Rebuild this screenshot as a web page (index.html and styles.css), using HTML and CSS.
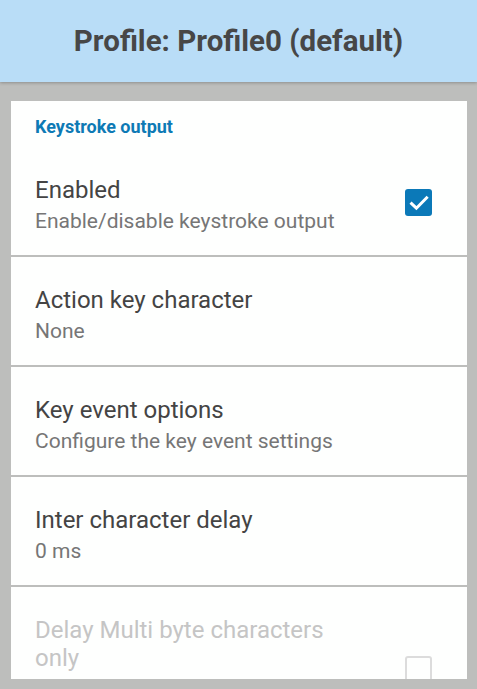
FILE: index.html
```html
<!DOCTYPE html>
<html>
<head>
<meta charset="utf-8">
<link rel="stylesheet" href="styles.css">
</head>
<body>
<header class="appbar">
  <h1 class="appbar-title">Profile: Profile0 (default)</h1>
</header>
<main class="content">
  <section class="card first">
    <div class="section-title">Keystroke output</div>
    <div class="pref">
      <div class="pref-text">
        <div class="pref-title">Enabled</div>
        <div class="pref-summary">Enable/disable keystroke output</div>
      </div>
      <div class="checkbox checked">
        <svg viewBox="0 0 24 24" width="24" height="24"><path d="M4.6 12.6 L9.4 17.2 L19.6 6.8" fill="none" stroke="#fff" stroke-width="3" stroke-linecap="square"/></svg>
      </div>
    </div>
  </section>
  <section class="card">
    <div class="pref">
      <div class="pref-text">
        <div class="pref-title">Action key character</div>
        <div class="pref-summary">None</div>
      </div>
    </div>
  </section>
  <section class="card">
    <div class="pref">
      <div class="pref-text">
        <div class="pref-title">Key event options</div>
        <div class="pref-summary">Configure the key event settings</div>
      </div>
    </div>
  </section>
  <section class="card">
    <div class="pref">
      <div class="pref-text">
        <div class="pref-title">Inter character delay</div>
        <div class="pref-summary">0 ms</div>
      </div>
    </div>
  </section>
  <section class="card last">
    <div class="pref disabled">
      <div class="pref-text">
        <div class="pref-title">Delay Multi byte characters only</div>
      </div>
      <div class="checkbox empty"></div>
    </div>
  </section>
</main>
</body>
</html>
```
FILE: styles.css
```css
html, body {
  margin: 0;
  padding: 0;
}
body {
  width: 477px;
  height: 689px;
  overflow: hidden;
  background: #bdbebc;
  font-family: Roboto, "Noto Sans", sans-serif;
}
.appbar {
  height: 82px;
  background: #b9ddf7;
  display: flex;
  align-items: center;
  justify-content: center;
  box-shadow: 0 1px 3px rgba(0,0,0,0.25);
  position: relative;
}
.appbar-title {
  margin: 0;
  font-size: 29.5px;
  line-height: 34px;
  font-weight: 700;
  color: #474747;
}
.content {
  padding: 19px 10px 0 11px;
  display: flex;
  flex-direction: column;
  gap: 2px;
}
.card {
  background: #fefffe;
}
.section-title {
  height: 46px;
  box-sizing: border-box;
  padding: 15px 0 0 24px;
  font-size: 18px;
  line-height: 22px;
  font-weight: 700;
  color: #0d7ab5;
}
.pref {
  height: 108px;
  box-sizing: border-box;
  padding: 28px 35px 0 24px;
  display: flex;
  align-items: flex-start;
}
.pref-text {
  flex: 1;
  max-width: 310px;
}
.pref-title {
  font-size: 24px;
  color: #444;
  line-height: 30px;
}
.pref-summary {
  font-size: 21px;
  color: #767676;
  line-height: 28px;
  margin-top: 2px;
}
.checkbox {
  width: 27px;
  height: 27px;
  box-sizing: border-box;
  border-radius: 3px;
  margin-left: auto;
  display: flex;
  align-items: center;
  justify-content: center;
}
.checkbox.checked {
  background: #0b79b8;
  margin-top: 14px;
}
.disabled .pref-title {
  color: #c5c5c5;
  line-height: 28px;
}
.last {
  height: 92px;
  overflow: hidden;
}
.last .pref {
  padding-top: 29px;
  height: 110px;
}
.checkbox.empty {
  border: 2px solid #dcdcdc;
  margin-top: 40px;
}
```
